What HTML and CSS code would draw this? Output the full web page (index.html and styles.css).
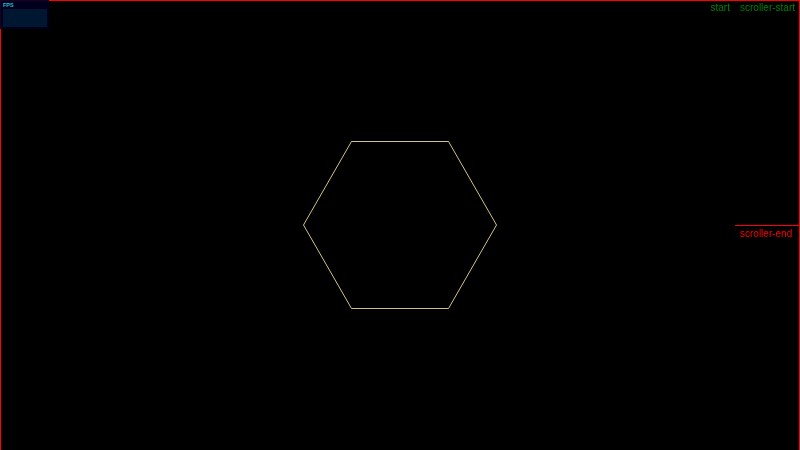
FILE: index.html
```
<!DOCTYPE html>
<html>
<head>
<meta charset="utf-8">
<title>Hexagon</title>
<link rel="stylesheet" href="styles.css">
</head>
<body>
  <main class="scroller">
    <section class="stage">
      <svg class="hexagon" width="200" height="170" viewBox="0 0 200 170">
        <polygon points="3.5,85 51.5,1.5 148.5,1.5 196.5,85 148.5,168.5 51.5,168.5" fill="none" stroke="#d2c08c" stroke-width="1"/>
      </svg>
    </section>
    <section class="spacer"></section>
  </main>

  <div class="stats">
    <span class="stats-label">FPS</span>
    <div class="stats-graph"></div>
  </div>

  <div class="markers-top">
    <span class="marker marker-start">start</span>
    <span class="marker marker-scroller-start">scroller-start</span>
  </div>

  <div class="marker-scroller-end">scroller-end</div>
</body>
</html>
```

FILE: styles.css
```
html, body {
  margin: 0;
  padding: 0;
  background: #000;
}

body {
  font-family: "Liberation Sans", Arial, sans-serif;
  border: 1px solid #ff0000;
  border-bottom: none;
}

.scroller {
  display: flex;
  flex-direction: column;
}

.stage {
  height: 448px;
  display: flex;
  align-items: center;
  justify-content: center;
}

.hexagon {
  display: block;
}

.spacer {
  height: 600px;
}

.stats {
  position: fixed;
  top: 0;
  left: 0;
  width: 49px;
  height: 29px;
  background: #000022;
  opacity: 0.9;
  box-sizing: border-box;
  padding: 2px 2px 2px 2px;
  display: flex;
  flex-direction: column;
}

.stats-label {
  color: #22d4e4;
  font-family: "Liberation Sans", Arial, sans-serif;
  font-weight: bold;
  font-size: 5.5px;
  line-height: 6px;
  margin-left: 1px;
  height: 7px;
}

.stats-graph {
  margin-left: 1px;
  width: 44px;
  height: 18px;
  background: #001a38;
}

.markers-top {
  position: fixed;
  top: 2px;
  right: 5px;
  display: flex;
  gap: 10px;
  font-size: 10px;
  line-height: 12px;
}

.marker {
  color: #008000;
}

.marker-scroller-end {
  position: fixed;
  top: 225px;
  right: 0;
  width: 55px;
  padding: 2px 5px 0 5px;
  border-top: 1px solid #ff0000;
  color: #ff0000;
  font-size: 10px;
  line-height: 12px;
  white-space: nowrap;
}
```
